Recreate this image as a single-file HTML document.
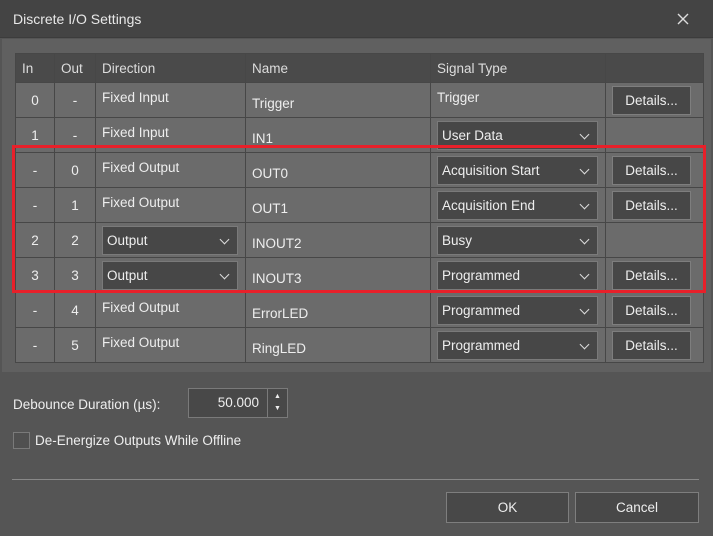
<!DOCTYPE html>
<html><head><style>
*{box-sizing:border-box;margin:0;padding:0}
body{width:713px;height:536px;background:#555;font-family:"Liberation Sans",sans-serif;font-size:13.5px;color:#eee;position:relative;overflow:hidden}
.title{position:absolute;left:0;top:0;width:713px;height:38px;background:#444;border-bottom:1px solid #3c3c3c}
.tt{position:absolute;left:13px;top:11px;font-size:14px;color:#e8e8e8}
.x{position:absolute;left:677px;top:13px}
.panel{position:absolute;left:2px;top:39px;width:709px;height:333px;background:#606060}
.grid{position:absolute;left:15px;top:53px;width:689px;border-collapse:collapse}
.grid td{border:1px solid #474747;background:#6b6b6b;height:35px;padding:0 6px;vertical-align:middle}
.grid tr.h td{background:#4a4a4a;height:29px;color:#ddd}
.c{text-align:center}
.t1{position:relative;top:-3px}
.t2{position:relative;top:3px}
.dd{height:29px;background:#474747;border:1px solid #7a7a7a;position:relative;padding:6px 4px;margin:0 1px 0 0}
.dd:after{content:"";position:absolute;right:9px;top:9px;width:6px;height:6px;border-right:1.5px solid #ddd;border-bottom:1.5px solid #ddd;transform:rotate(45deg)}
.btn{height:29px;background:#474747;border:1px solid #7e7e7e;text-align:center;line-height:27px;margin:0 6px 0 0}
.red{position:absolute;left:12px;top:145px;width:694px;height:148px;border:3px solid #e8202a}
.lbl{position:absolute;left:13px;top:397px}
.spin{position:absolute;left:188px;top:388px;width:100px;height:30px;border:1px solid #7a7a7a;background:#484848}
.spin span{position:absolute;right:28px;top:6px}
.spin i{position:absolute;right:0;top:0;width:20px;height:28px;border-left:1px solid #7a7a7a;font-style:normal;font-size:7px;text-align:center;line-height:12px;padding-top:2px}
.cb{position:absolute;left:13px;top:432px;width:17px;height:17px;border:1px solid #7a7a7a;background:#505050}
.cbl{position:absolute;left:35px;top:433px}
.sep{position:absolute;left:12px;top:479px;width:687px;height:1px;background:#888}
.b{position:absolute;top:492px;height:31px;border:1px solid #7e7e7e;background:#484848;text-align:center;line-height:29px}
</style></head><body>
<div class="title"><span class="tt">Discrete I/O Settings</span><svg class="x" width="12" height="12" viewBox="0 0 12 12"><path d="M1 1L11 11M11 1L1 11" stroke="#ddd" stroke-width="1.4"/></svg></div>
<div class="panel"></div>
<table class="grid">
<tr class="h"><td style="width:39px">In</td><td style="width:41px">Out</td><td style="width:150px">Direction</td><td style="width:185px">Name</td><td style="width:175px">Signal Type</td><td></td></tr>
<tr><td class="c">0</td><td class="c">-</td><td><span class="t1">Fixed Input</span></td><td><span class="t2">Trigger</span></td><td><span class="t1">Trigger</span></td><td><div class="btn">Details...</div></td></tr>
<tr><td class="c">1</td><td class="c">-</td><td><span class="t1">Fixed Input</span></td><td><span class="t2">IN1</span></td><td><div class="dd">User Data</div></td><td></td></tr>
<tr><td class="c">-</td><td class="c">0</td><td><span class="t1">Fixed Output</span></td><td><span class="t2">OUT0</span></td><td><div class="dd">Acquisition Start</div></td><td><div class="btn">Details...</div></td></tr>
<tr><td class="c">-</td><td class="c">1</td><td><span class="t1">Fixed Output</span></td><td><span class="t2">OUT1</span></td><td><div class="dd">Acquisition End</div></td><td><div class="btn">Details...</div></td></tr>
<tr><td class="c">2</td><td class="c">2</td><td><div class="dd">Output</div></td><td><span class="t2">INOUT2</span></td><td><div class="dd">Busy</div></td><td></td></tr>
<tr><td class="c">3</td><td class="c">3</td><td><div class="dd">Output</div></td><td><span class="t2">INOUT3</span></td><td><div class="dd">Programmed</div></td><td><div class="btn">Details...</div></td></tr>
<tr><td class="c">-</td><td class="c">4</td><td><span class="t1">Fixed Output</span></td><td><span class="t2">ErrorLED</span></td><td><div class="dd">Programmed</div></td><td><div class="btn">Details...</div></td></tr>
<tr><td class="c">-</td><td class="c">5</td><td><span class="t1">Fixed Output</span></td><td><span class="t2">RingLED</span></td><td><div class="dd">Programmed</div></td><td><div class="btn">Details...</div></td></tr>
</table>
<div class="red"></div>
<div class="lbl">Debounce Duration (µs):</div>
<div class="spin"><span>50.000</span><i>▲<br>▼</i></div>
<div class="cb"></div><div class="cbl">De-Energize Outputs While Offline</div>
<div class="sep"></div>
<div class="b" style="left:446px;width:123px">OK</div>
<div class="b" style="left:575px;width:124px">Cancel</div>
</body></html>
